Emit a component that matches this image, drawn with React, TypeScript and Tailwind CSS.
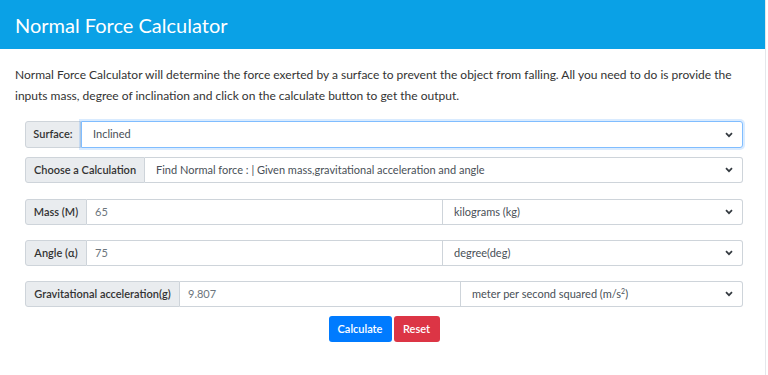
import React from 'react';

function Chevron() {
  return (
    <svg width="8" height="6" viewBox="0 0 8 6" className="shrink-0">
      <path d="M1 1.2l3 3 3-3" fill="none" stroke="#343a40" strokeWidth="1.7" />
    </svg>
  );
}

function Label({ children, w }: { children: React.ReactNode; w: string }) {
  return (
    <div className={`${w} flex items-center justify-center bg-[#e9ecef] border border-[#ced4da] rounded-l-[3px] text-[11px] text-[#333] font-semibold shrink-0`}>
      {children}
    </div>
  );
}

function Select({ value, w, focus }: { value: React.ReactNode; w: string; focus?: boolean }) {
  return (
    <div
      className={`${w} flex items-center justify-between pl-[11px] pr-[9px] bg-white rounded-r-[3px] text-[11px] text-[#495057] ${
        focus ? 'border border-[#80bdff] shadow-[0_0_0_2px_rgba(0,123,255,0.15)]' : 'border border-l-0 border-[#ced4da]'
      }`}
    >
      <span>{value}</span>
      <Chevron />
    </div>
  );
}

function Row({ label, labelW, value, unit, inputW, mt }: { label: React.ReactNode; labelW: string; value: string; unit: React.ReactNode; inputW: string; mt: string }) {
  return (
    <div className={`flex h-[26px] ${mt}`}>
      <Label w={labelW}>{label}</Label>
      <div className={`${inputW} flex items-center pl-[8px] border-y border-r border-[#ced4da] bg-white text-[11px] text-[#6c757d]`}>{value}</div>
      <Select value={unit} w="flex-1" />
    </div>
  );
}

export default function App() {
  return (
    <div className="w-[768px] h-[375px] bg-white overflow-hidden" style={{ fontFamily: 'Lato, "Open Sans", sans-serif' }}>
      <div className="w-[766px] h-[375px] border-r border-[#e5e7eb]">
        <div className="h-[49px] bg-[#0aa1e6] flex items-center pl-[15px]">
          <h1 className="text-white text-[20px] leading-none">Normal Force Calculator</h1>
        </div>
        <p className="px-[15px] pt-[15px] text-[12px] leading-[21px] text-[#333]">
          Normal Force Calculator will determine the force exerted by a surface to prevent the object from falling. All you need to do is provide the inputs mass, degree of inclination and click on the calculate button to get the output.
        </p>
        <div className="pl-[25px] pt-[15px] w-[743px]">
          <div className="flex h-[27px]">
            <Label w="w-[56px]">Surface:</Label>
            <Select value="Inclined" w="flex-1" focus />
          </div>
          <div className="flex h-[26px] mt-[9px]">
            <Label w="w-[120px]">Choose a Calculation</Label>
            <Select value="Find Normal force : | Given mass,gravitational acceleration and angle" w="flex-1" />
          </div>
          <Row mt="mt-[16px]" label="Mass (M)" labelW="w-[62px]" value="65" inputW="w-[356px]" unit="kilograms (kg)" />
          <Row mt="mt-[15px]" label="Angle (α)" labelW="w-[62px]" value="75" inputW="w-[356px]" unit="degree(deg)" />
          <Row
            mt="mt-[15px]"
            label="Gravitational acceleration(g)"
            labelW="w-[155px]"
            value="9.807"
            inputW="w-[281px]"
            unit={<span>meter per second squared (m/s<sup className="text-[7px]">2</sup>)</span>}
          />
          <div className="flex justify-center gap-[2px] mt-[9px]">
            <button className="h-[26px] w-[63px] rounded-[3px] bg-[#007bff] text-white text-[11px] font-semibold">Calculate</button>
            <button className="h-[26px] w-[46px] rounded-[3px] bg-[#dc3545] text-white text-[11px] font-semibold">Reset</button>
          </div>
        </div>
      </div>
    </div>
  );
}
